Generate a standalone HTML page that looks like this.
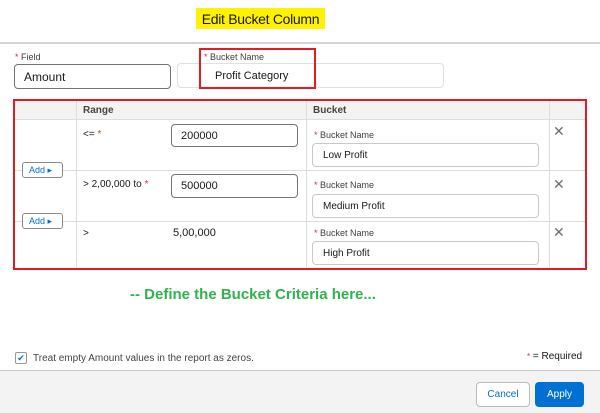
<!DOCTYPE html>
<html><head><style>
*{box-sizing:border-box;margin:0;padding:0}
body{width:600px;height:413px;background:#fff;font-family:"Liberation Sans",Arial,sans-serif;position:relative;overflow:hidden;color:#181818}
.a{position:absolute;white-space:nowrap}
.inp{position:absolute;border:1px solid #c9c9c9;border-radius:4px;background:#fff;font-size:11px;padding-left:10px;display:flex;align-items:center;white-space:nowrap}
.dk{border-color:#747474}
.lbl{position:absolute;font-size:9px;color:#3e3e3c;white-space:nowrap}
.lbl b{color:#c23934;font-weight:normal}
.x{position:absolute;font-size:14px;color:#706e6b}
.add{position:absolute;width:41px;height:16px;border:1px solid #8a8a8a;border-radius:3px;background:#fff;color:#0070d2;font-size:9px;padding-left:6px;line-height:14px;white-space:nowrap}
</style></head><body>
<div class="a" style="left:196px;top:8px;width:129px;height:21px;background:#fff200"></div>
<div class="a" style="left:196px;top:8px;width:129px;height:21px;text-align:center;font-size:14px;line-height:22px;letter-spacing:-0.3px">Edit Bucket Column</div>
<div class="a" style="left:0;top:42px;width:600px;height:2px;background:#d4d4d4"></div>

<div class="lbl" style="left:15px;top:52px"><b>*</b> Field</div>
<div class="inp dk" style="left:14px;top:64px;width:157px;height:25px;font-size:12px;padding-left:9px">Amount</div>
<div class="x" style="left:175px;top:67px">✕</div>
<div class="inp" style="left:177px;top:63px;width:267px;height:25px;border-color:#e0e0e0"></div>
<div class="a" style="left:199px;top:48px;width:117px;height:41px;border:2px solid #e41b23"></div>
<div class="lbl" style="left:204px;top:52px"><b>*</b> Bucket Name</div>
<div class="a" style="left:215px;top:70px;font-size:11px">Profit Category</div>

<div class="a" style="left:15px;top:101px;width:570px;height:19px;background:#f3f3f3;border-bottom:1px solid #ddd"></div>
<div class="a" style="left:76px;top:101px;width:1px;height:166px;background:#ddd"></div>
<div class="a" style="left:306px;top:101px;width:1px;height:166px;background:#ddd"></div>
<div class="a" style="left:549px;top:101px;width:1px;height:166px;background:#ddd"></div>
<div class="a" style="left:15px;top:170px;width:570px;height:1px;background:#ddd"></div>
<div class="a" style="left:15px;top:221px;width:570px;height:1px;background:#ddd"></div>
<div class="a" style="left:83px;top:105px;font-size:10px;font-weight:bold;color:#444">Range</div>
<div class="a" style="left:313px;top:105px;font-size:10px;font-weight:bold;color:#444">Bucket</div>

<div class="a" style="left:83px;top:129px;font-size:10px">&lt;= <span style="color:#c23934">*</span></div>
<div class="inp dk" style="left:171px;top:124px;width:127px;height:23px;padding-left:9px">200000</div>
<div class="a" style="left:83px;top:179px;font-size:10px">&gt; 2,00,000 to <span style="color:#c23934">*</span></div>
<div class="inp dk" style="left:171px;top:174px;width:127px;height:24px;padding-left:9px">500000</div>
<div class="a" style="left:83px;top:228px;font-size:10px">&gt;</div>
<div class="a" style="left:173px;top:227px;font-size:11px">5,00,000</div>

<div class="lbl" style="left:314px;top:130px"><b>*</b> Bucket Name</div>
<div class="inp" style="left:312px;top:143px;width:227px;height:24px;font-size:10px">Low Profit</div>
<div class="lbl" style="left:314px;top:180px"><b>*</b> Bucket Name</div>
<div class="inp" style="left:312px;top:194px;width:227px;height:24px;font-size:10px">Medium Profit</div>
<div class="lbl" style="left:314px;top:228px"><b>*</b> Bucket Name</div>
<div class="inp" style="left:312px;top:241px;width:227px;height:24px;font-size:10px">High Profit</div>
<div class="x" style="left:553px;top:123px">✕</div>
<div class="x" style="left:553px;top:176px">✕</div>
<div class="x" style="left:553px;top:224px">✕</div>
<div class="add" style="left:22px;top:162px">Add ▸</div>
<div class="add" style="left:22px;top:213px">Add ▸</div>
<div class="a" style="left:13px;top:99px;width:574px;height:171px;border:2px solid #e41b23"></div>

<div class="a" style="left:130px;top:286px;font-size:15px;font-weight:bold;color:#2fb34a">-- Define the Bucket Criteria here...</div>

<div class="a" style="left:15px;top:352px;width:12px;height:12px;border:1px solid #999;border-radius:2px;color:#0070d2;font-size:9px;line-height:10px;text-align:center">✔</div>
<div class="a" style="left:33px;top:353px;font-size:10px;color:#444">Treat empty Amount values in the report as zeros.</div>
<div class="a" style="left:527px;top:351px;font-size:10px"><span style="color:#c23934;font-size:8px">*</span> = Required</div>
<div class="a" style="left:0;top:370px;width:600px;height:43px;background:#f3f3f3;border-top:1px solid #ccc"></div>
<div class="a" style="left:476px;top:382px;width:54px;height:25px;border:1px solid #bbb;border-radius:4px;background:#fff;color:#0070d2;font-size:10px;text-align:center;line-height:23px">Cancel</div>
<div class="a" style="left:535px;top:382px;width:49px;height:25px;border-radius:4px;background:#0070d2;color:#fff;font-size:10px;text-align:center;line-height:25px">Apply</div>
</body></html>
